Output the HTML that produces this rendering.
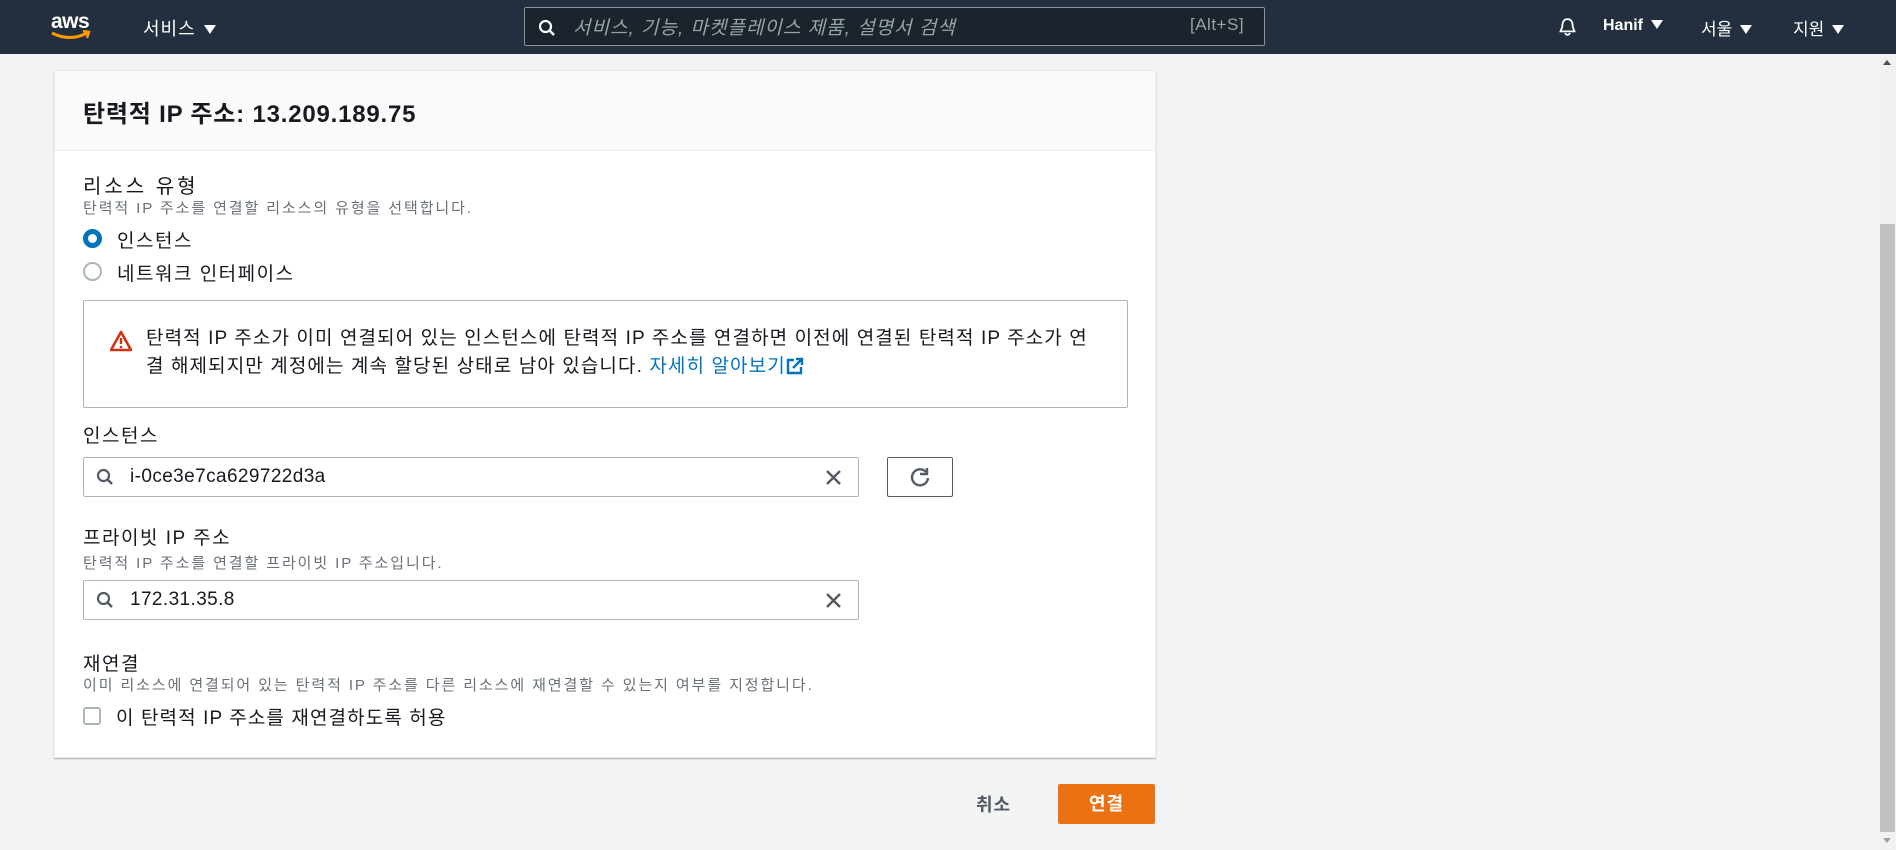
<!DOCTYPE html>
<html><head><meta charset="utf-8"><style>
*{margin:0;padding:0;box-sizing:border-box}
body{width:1896px;height:850px;overflow:hidden;background:#f2f3f3;font-family:"Liberation Sans","Noto Sans CJK KR",sans-serif;color:#16191f;position:relative}
.a{position:absolute;white-space:nowrap}
.hdr{position:absolute;left:0;top:0;width:1896px;height:54px;background:#232f3e}
.w{color:#fff;font-size:18px}
.tri{display:inline-block;width:0;height:0;border-left:6px solid transparent;border-right:6px solid transparent;border-top:9px solid #fff;margin-left:8px;vertical-align:1px}
.lbl{font-size:19px;letter-spacing:1.5px;color:#16191f}
.desc{font-size:15px;letter-spacing:1.9px;color:#687078}
.rad{font-size:19px;letter-spacing:1.5px}
.inp{position:absolute;border:1px solid #aab7b8;border-radius:2px;background:#fff;height:40px}
</style></head><body>
<div class="hdr"></div>
<div class="a" style="left:51px;top:10px;color:#fff;font-size:21px;font-weight:bold;letter-spacing:-0.5px">aws</div>
<svg class="a" style="left:50px;top:30px" width="42" height="12" viewBox="0 0 42 12"><path d="M2 3 Q20 12 37 3" stroke="#f90" stroke-width="3" fill="none"/><path d="M33 1 L39 2 L37 8" stroke="#f90" stroke-width="2.5" fill="none"/></svg>
<div class="a w" style="left:143px;top:15px;letter-spacing:1px">서비스<span class="tri"></span></div>
<div class="a" style="left:524px;top:7px;width:741px;height:39px;background:#1b232d;border:1px solid #879596;border-radius:2px"></div>
<svg class="a" style="left:538px;top:19px" width="18" height="18" viewBox="0 0 18 18"><circle cx="7.5" cy="7.5" r="5.5" stroke="#fff" stroke-width="2.2" fill="none"/><path d="M11.5 11.5 L16 16" stroke="#fff" stroke-width="2.4"/></svg>
<div class="a" style="left:573px;top:13px;color:#95a5a6;font-size:19px;letter-spacing:1px;font-style:italic">서비스, 기능, 마켓플레이스 제품, 설명서 검색</div>
<div class="a" style="left:1190px;top:15px;color:#95a5a6;font-size:17px;letter-spacing:0.5px">[Alt+S]</div>
<svg class="a" style="left:1557px;top:16px" width="21" height="22" viewBox="0 0 24 24"><path d="M12 3 C7 3 6 8 6 12 L4 17 H20 L18 12 C18 8 17 3 12 3Z M9 19 Q12 23 15 19" stroke="#fff" stroke-width="2" fill="none"/></svg>
<div class="a w" style="left:1603px;top:17px;font-weight:bold;font-size:16px">Hanif<span class="tri"></span></div>
<div class="a w" style="left:1701px;top:15px;font-size:17px">서울<span class="tri"></span></div>
<div class="a w" style="left:1793px;top:15px;font-size:17px">지원<span class="tri"></span></div>
<!-- scrollbar -->
<div class="a" style="left:1878px;top:54px;width:18px;height:796px;background:#f1f1f1"></div>
<div class="a" style="left:1880px;top:224px;width:15px;height:608px;background:#c1c1c1"></div>
<div class="a" style="left:1883px;top:60px;border-left:4px solid transparent;border-right:4px solid transparent;border-bottom:5px solid #505050"></div>
<div class="a" style="left:1883px;top:838px;border-left:4px solid transparent;border-right:4px solid transparent;border-top:5px solid #a0a0a0"></div>
<!-- panel -->
<div class="a" style="left:54px;top:70px;width:1102px;height:688px;background:#fff;border:1px solid #eaeded;box-shadow:0 1px 1px rgba(0,28,36,.3)"></div>
<div class="a" style="left:55px;top:71px;width:1100px;height:80px;background:#fafafa;border-bottom:1px solid #eaeded"></div>
<div class="a" style="left:83px;top:94px;font-size:24px;letter-spacing:0.8px;font-weight:bold">탄력적 IP 주소: 13.209.189.75</div>
<div class="a lbl" style="left:83px;top:170px;font-size:20px;letter-spacing:3px">리소스 유형</div>
<div class="a desc" style="left:83px;top:197px">탄력적 IP 주소를 연결할 리소스의 유형을 선택합니다.</div>
<div class="a" style="left:83px;top:229px;width:19px;height:19px;border-radius:50%;border:5px solid #0073bb;background:#fff"></div>
<div class="a rad" style="left:117px;top:226px">인스턴스</div>
<div class="a" style="left:83px;top:262px;width:19px;height:19px;border-radius:50%;border:2px solid #aab7b8;background:#fff"></div>
<div class="a rad" style="left:117px;top:259px">네트워크 인터페이스</div>
<div class="a" style="left:83px;top:300px;width:1045px;height:108px;border:1px solid #aab7b8;border-radius:2px;background:#fff"></div>
<svg class="a" style="left:110px;top:330px" width="22" height="22" viewBox="0 0 22 22"><path d="M11 2 L21 20 H1 Z" fill="none" stroke="#d13212" stroke-width="2.6" stroke-linejoin="round"/><path d="M11 8 V14" stroke="#d13212" stroke-width="2.4"/><circle cx="11" cy="17" r="1.3" fill="#d13212"/></svg>
<div class="a" style="left:146px;top:325px;line-height:28px;font-size:19px;letter-spacing:1.1px">탄력적 IP 주소가 이미 연결되어 있는 인스턴스에 탄력적 IP 주소를 연결하면 이전에 연결된 탄력적 IP 주소가 연<br>결 해제되지만 계정에는 계속 할당된 상태로 남아 있습니다. <span style="color:#0073bb">자세히 알아보기</span><svg width="18" height="18" viewBox="0 0 18 18" style="vertical-align:-3px"><path d="M8 3 H2 V16 H15 V10" stroke="#0073bb" stroke-width="2.4" fill="none"/><path d="M7 11 L16 2 M10 2 H16 V8" stroke="#0073bb" stroke-width="2.4" fill="none"/></svg></div>
<div class="a lbl" style="left:83px;top:421px">인스턴스</div>
<div class="inp" style="left:83px;top:457px;width:776px"></div>
<svg class="a" style="left:96px;top:468px" width="18" height="18" viewBox="0 0 18 18"><circle cx="7.5" cy="7.5" r="5.5" stroke="#545b64" stroke-width="2.2" fill="none"/><path d="M11.5 11.5 L16 16" stroke="#545b64" stroke-width="2.4"/></svg>
<div class="a" style="left:130px;top:466px;font-size:19px;letter-spacing:0.4px">i-0ce3e7ca629722d3a</div>
<svg class="a" style="left:825px;top:469px" width="17" height="17" viewBox="0 0 17 17"><path d="M2 2 L15 15 M15 2 L2 15" stroke="#545b64" stroke-width="2.4"/></svg>
<div class="a" style="left:887px;top:457px;width:66px;height:40px;border:1px solid #545b64;border-radius:2px;background:#fff"></div>
<svg class="a" style="left:909px;top:466px" width="22" height="22" viewBox="0 0 22 22"><path d="M17 6 A8 8 0 1 0 19 12" stroke="#545b64" stroke-width="2.4" fill="none"/><path d="M11 5 H18 V-1" stroke="#545b64" stroke-width="2.4" fill="none" transform="translate(0,3)"/></svg>
<div class="a lbl" style="left:83px;top:523px">프라이빗 IP 주소</div>
<div class="a desc" style="left:83px;top:552px">탄력적 IP 주소를 연결할 프라이빗 IP 주소입니다.</div>
<div class="inp" style="left:83px;top:580px;width:776px"></div>
<svg class="a" style="left:96px;top:591px" width="18" height="18" viewBox="0 0 18 18"><circle cx="7.5" cy="7.5" r="5.5" stroke="#545b64" stroke-width="2.2" fill="none"/><path d="M11.5 11.5 L16 16" stroke="#545b64" stroke-width="2.4"/></svg>
<div class="a" style="left:130px;top:589px;font-size:19px;letter-spacing:0.4px">172.31.35.8</div>
<svg class="a" style="left:825px;top:592px" width="17" height="17" viewBox="0 0 17 17"><path d="M2 2 L15 15 M15 2 L2 15" stroke="#545b64" stroke-width="2.4"/></svg>
<div class="a lbl" style="left:83px;top:649px">재연결</div>
<div class="a desc" style="left:83px;top:674px">이미 리소스에 연결되어 있는 탄력적 IP 주소를 다른 리소스에 재연결할 수 있는지 여부를 지정합니다.</div>
<div class="a" style="left:83px;top:707px;width:18px;height:18px;border:2px solid #aab7b8;border-radius:3px;background:#fff"></div>
<div class="a" style="left:116px;top:703px;font-size:19px;letter-spacing:1.1px">이 탄력적 IP 주소를 재연결하도록 허용</div>
<div class="a" style="left:976px;top:791px;font-size:18px;letter-spacing:1px;font-weight:bold;color:#545b64">취소</div>
<div class="a" style="left:1058px;top:784px;width:97px;height:40px;background:#ec7211;border-radius:2px;color:#fff;font-size:18px;letter-spacing:1px;font-weight:bold;text-align:center;line-height:40px">연결</div>
</body></html>
